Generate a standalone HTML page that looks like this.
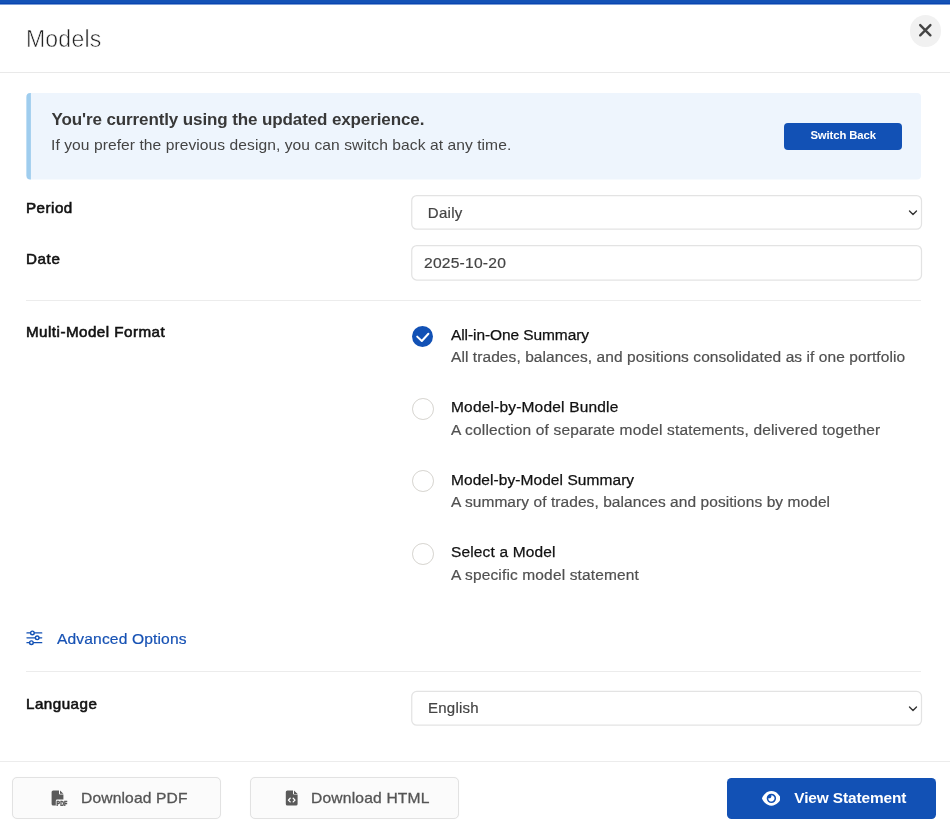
<!DOCTYPE html>
<html lang="en">
<head>
<meta charset="utf-8">
<title>Models</title>
<style>
html,body{margin:0;padding:0;background:#fff;}
body{will-change:transform;width:950px;height:832px;position:relative;overflow:hidden;font-family:"Liberation Sans",sans-serif;color:#222;}
.abs{position:absolute;}
.t{position:absolute;white-space:nowrap;line-height:1;margin:0;padding:0;}
.topbar{left:0;top:0;width:950px;height:5px;background:linear-gradient(#1452b6 0,#1452b6 3px,#0a45b1 3px,#0a45b1 4px,#7c9dd5 4px,#7c9dd5 5px);}
.hline{height:1px;background:#ececec;}
.close{left:910.2px;top:15.4px;width:31.2px;height:31.2px;border-radius:50%;background:#f1f1f1;}
.btn-blue{background:#1251b5;border-radius:4px;}
.lbl{font-weight:normal;color:#111;font-size:14.2px;-webkit-text-stroke:0.55px #111;transform-origin:0 50%;transform:scaleX(1.07);}
.opt-t{color:#111;font-size:14.9px;-webkit-text-stroke:0.25px #111;transform-origin:0 50%;transform:scaleX(1.04);}
.opt-d{color:#505050;font-size:14.9px;-webkit-text-stroke:0.2px #505050;transform-origin:0 50%;transform:scaleX(1.04);}
.radio{width:21.8px;height:21.8px;box-sizing:border-box;border-radius:50%;border:1.1px solid #d6d4cf;background:#fff;}
.radio.on{border:none;background:#1251b5;}
.btn-gray{box-sizing:border-box;border:1px solid #e2e2e2;border-radius:5px;background:#fbfbfb;box-shadow:0 0 1px rgba(0,0,0,0.06);}
.btn-txt{font-size:15px;color:#555;font-weight:normal;-webkit-text-stroke:0.3px #555;transform-origin:0 50%;transform:scaleX(1.04);}
</style>
</head>
<body>
<div class="abs topbar"></div>

<!-- header -->
<h1 class="t" id="title" style="left:25.9px;top:28.0px;font-size:23px;font-weight:normal;color:#222;letter-spacing:0.25px;-webkit-text-stroke:0.55px #fff;">Models</h1>
<div class="abs close">
  <svg width="31.2" height="31.2" viewBox="0 0 31.2 31.2" style="display:block"><path d="M10.2 10.1 L20.4 20.3 M20.4 10.1 L10.2 20.3" stroke="#444" stroke-width="2.4" stroke-linecap="round" fill="none"/></svg>
</div>
<div class="abs hline" style="left:0;top:72px;width:950px;background:#e9e9e9;"></div>

<!-- banner -->
<svg class="abs" style="left:26px;top:93px;" width="896" height="87" viewBox="0 0 896 87">
  <rect x="0.4" y="0" width="894.6" height="86.5" rx="4" ry="4" fill="#eef5fd"/>
  <path d="M4.9 0 H4.4 Q0.4 0 0.4 4 V82.5 Q0.4 86.5 4.4 86.5 H4.9 Z" fill="#9fcdee"/>
</svg>
<div class="t" id="b1" style="left:51.5px;top:110.7px;font-size:17px;font-weight:bold;color:#383838;letter-spacing:-0.11px;">You're currently using the updated experience.</div>
<div class="t" id="b2" style="left:50.8px;top:137px;font-size:15px;color:#444;transform-origin:0 50%;transform:scaleX(1.04);letter-spacing:0.06px;">If you prefer the previous design, you can switch back at any time.</div>
<div class="abs btn-blue" style="left:784px;top:122.5px;width:118px;height:27px;"></div>
<div class="t" id="sb" style="left:810.4px;top:129.6px;font-size:11.3px;font-weight:bold;color:#fff;letter-spacing:-0.1px;">Switch Back</div>

<!-- Period -->
<div class="t lbl" id="l1" style="left:26.0px;top:201.2px;letter-spacing:0.44px;">Period</div>
<svg class="abs" style="left:405px;top:190px;" width="525" height="45" viewBox="0 0 525 45"><rect x="6.75" y="5.60" width="509.75" height="33.60" rx="5" ry="5" fill="#fff" stroke="#e3e3e3" stroke-width="1.25"/></svg>
<div class="t" id="v1" style="left:427.8px;top:204.6px;font-size:15px;color:#444;-webkit-text-stroke:0.2px #444;letter-spacing:0.30px;">Daily</div>
<svg class="abs" style="left:906.9px;top:207.5px;" width="12" height="9" viewBox="0 0 12 9"><path d="M2.5 3 L6 6.5 L9.5 3" stroke="#333" stroke-width="1.35" fill="none" stroke-linecap="round" stroke-linejoin="round"/></svg>

<!-- Date -->
<div class="t lbl" id="l2" style="left:26.0px;top:251.7px;letter-spacing:0.55px;">Date</div>
<svg class="abs" style="left:405px;top:240px;" width="525" height="46" viewBox="0 0 525 46"><rect x="6.75" y="5.50" width="509.75" height="34.50" rx="5" ry="5" fill="#fff" stroke="#e3e3e3" stroke-width="1.25"/></svg>
<div class="t" id="v2" style="left:424.2px;top:255px;font-size:15.2px;color:#444;-webkit-text-stroke:0.2px #444;transform-origin:0 50%;transform:scaleX(1.03);letter-spacing:0.20px;">2025-10-20</div>

<div class="abs hline" style="left:26px;top:300px;width:895px;"></div>

<!-- Multi-Model Format -->
<div class="t lbl" id="l3" style="left:26.0px;top:324.7px;letter-spacing:0.44px;">Multi-Model Format</div>

<div class="abs radio on" style="left:411.7px;top:325.5px;">
  <svg width="22" height="22" viewBox="0 0 22 22" style="display:block"><path d="M5.2 10.6 L9.8 15 L16.4 7.8" stroke="#fff" stroke-width="2" fill="none" stroke-linecap="round" stroke-linejoin="round"/></svg>
</div>
<div class="t opt-t" id="o1" style="left:451.2px;top:327.8px;letter-spacing:-0.08px;">All-in-One Summary</div>
<div class="t opt-d" id="d1" style="left:451.2px;top:349.7px;letter-spacing:0.08px;">All trades, balances, and positions consolidated as if one portfolio</div>

<div class="abs radio" style="left:411.8px;top:397.9px;"></div>
<div class="t opt-t" id="o2" style="left:450.7px;top:399.7px;letter-spacing:0.18px;">Model-by-Model Bundle</div>
<div class="t opt-d" id="d2" style="left:451.2px;top:423.0px;letter-spacing:0.16px;">A collection of separate model statements, delivered together</div>

<div class="abs radio" style="left:411.8px;top:470.3px;"></div>
<div class="t opt-t" id="o3" style="left:450.7px;top:472.8px;letter-spacing:0.07px;">Model-by-Model Summary</div>
<div class="t opt-d" id="d3" style="left:451.2px;top:494.7px;letter-spacing:0.07px;">A summary of trades, balances and positions by model</div>

<div class="abs radio" style="left:411.8px;top:543px;"></div>
<div class="t opt-t" id="o4" style="left:450.7px;top:544.8px;letter-spacing:0.15px;">Select a Model</div>
<div class="t opt-d" id="d4" style="left:451.2px;top:567.8px;letter-spacing:0.14px;">A specific model statement</div>

<!-- Advanced options -->
<svg class="abs" style="left:25px;top:628px;" width="20" height="20" viewBox="0 0 20 20">
  <g stroke="#1251b5" stroke-width="1.4" fill="none" stroke-linecap="round">
    <path d="M2 4.9 H16.7 M2 9.85 H16.7 M2 14.65 H16.7"/>
    <circle cx="7.4" cy="4.9" r="1.8" fill="#fff"/>
    <circle cx="12.2" cy="9.85" r="1.8" fill="#fff"/>
    <circle cx="6.4" cy="14.65" r="1.8" fill="#fff"/>
  </g>
</svg>
<div class="t" id="adv" style="left:56.5px;top:630.6px;font-size:15px;color:#1752b4;-webkit-text-stroke:0.2px #1752b4;transform-origin:0 50%;transform:scaleX(1.04);letter-spacing:0.13px;">Advanced Options</div>

<div class="abs hline" style="left:26px;top:671px;width:895px;"></div>

<!-- Language -->
<div class="t lbl" id="l4" style="left:26.0px;top:697.4px;letter-spacing:0.44px;">Language</div>
<svg class="abs" style="left:405px;top:686px;" width="525" height="45" viewBox="0 0 525 45"><rect x="6.75" y="5.40" width="509.75" height="33.80" rx="5" ry="5" fill="#fff" stroke="#e3e3e3" stroke-width="1.25"/></svg>
<div class="t" id="v3" style="left:428.0px;top:700.2px;font-size:15px;color:#444;-webkit-text-stroke:0.2px #444;letter-spacing:0.25px;">English</div>
<svg class="abs" style="left:906.9px;top:703.5px;" width="12" height="9" viewBox="0 0 12 9"><path d="M2.5 3 L6 6.5 L9.5 3" stroke="#333" stroke-width="1.35" fill="none" stroke-linecap="round" stroke-linejoin="round"/></svg>

<!-- footer -->
<div class="abs hline" style="left:0;top:761px;width:950px;background:#ececec;"></div>

<div class="abs btn-gray" style="left:12px;top:777px;width:209px;height:42px;"></div>
<svg class="abs" id="ipdf" style="left:51px;top:790px;" width="17" height="16" viewBox="0 0 17 16">
  <path d="M2.2 0.4 H8 V3.6 Q8 4.6 9 4.6 H12.4 V9.6 H6.2 Q4.8 9.6 4.8 11 V15.6 H2.2 Q0.6 15.6 0.6 14 V2 Q0.6 0.4 2.2 0.4 Z M9 0.4 L12.4 3.8 H9 Z" fill="#5a5a5a"/>
  <text x="5.6" y="15.7" font-family="Liberation Sans, sans-serif" font-weight="bold" font-size="6.4" fill="#555" stroke="#555" stroke-width="0.45" textLength="10.6" lengthAdjust="spacingAndGlyphs">PDF</text>
</svg>
<div class="t btn-txt" id="bt1" style="left:81.4px;top:790px;letter-spacing:0.14px;">Download PDF</div>

<div class="abs btn-gray" style="left:250px;top:777px;width:209px;height:42px;"></div>
<svg class="abs" id="ihtml" style="left:285px;top:790px;" width="14" height="16" viewBox="0 0 14 16">
  <path d="M2.4 0.4 H8 V3.6 Q8 4.6 9 4.6 H12.6 V14 Q12.6 15.6 11 15.6 H2.4 Q0.8 15.6 0.8 14 V2 Q0.8 0.4 2.4 0.4 Z M9 0.4 L12.6 4 H9 Z" fill="#5a5a5a"/>
  <path d="M5.2 8.3 L3.4 10.1 L5.2 11.9 M8.2 8.3 L10 10.1 L8.2 11.9" stroke="#fff" stroke-width="1.3" fill="none" stroke-linecap="round" stroke-linejoin="round"/>
</svg>
<div class="t btn-txt" id="bt2" style="left:310.9px;top:790.0px;letter-spacing:0.18px;">Download HTML</div>

<div class="abs btn-blue" style="left:727px;top:778px;width:208.5px;height:41px;border-radius:4.5px;"></div>
<svg class="abs" id="ieye" style="left:761.6px;top:789.7px;" width="18.8" height="16.71" viewBox="0 0 576 512">
  <path fill="#fff" d="M288 32c-80.8 0-145.5 36.800-192.600 80.600C48.600 156 17.300 208 2.500 243.700c-3.300 7.900-3.300 16.700 0 24.600C17.300 304 48.600 356 95.400 399.400C142.500 443.200 207.200 480 288 480s145.500-36.800 192.600-80.600c46.800-43.500 78.100-95.400 93-131.100c3.300-7.900 3.300-16.700 0-24.600c-14.900-35.700-46.200-87.700-93-131.100C433.500 68.800 368.800 32 288 32zM144 256a144 144 0 1 1 288 0 144 144 0 1 1 -288 0zm144-64c0 35.300-28.700 64-64 64c-7.100 0-13.900-1.200-20.300-3.300c-5.500-1.800-11.900 1.600-11.700 7.400c.3 6.900 1.300 13.800 3.200 20.700c13.700 51.200 66.400 81.600 117.600 67.900s81.600-66.400 67.900-117.600c-11.100-41.500-47.800-69.400-88.600-71.100c-5.800-.2-9.200 6.100-7.400 11.700c2.100 6.400 3.300 13.200 3.300 20.300z"/>
</svg>
<div class="t" id="bt3" style="left:794.3px;top:790px;font-size:15.4px;font-weight:bold;color:#fff;letter-spacing:-0.11px;">View Statement</div>

</body>
</html>
